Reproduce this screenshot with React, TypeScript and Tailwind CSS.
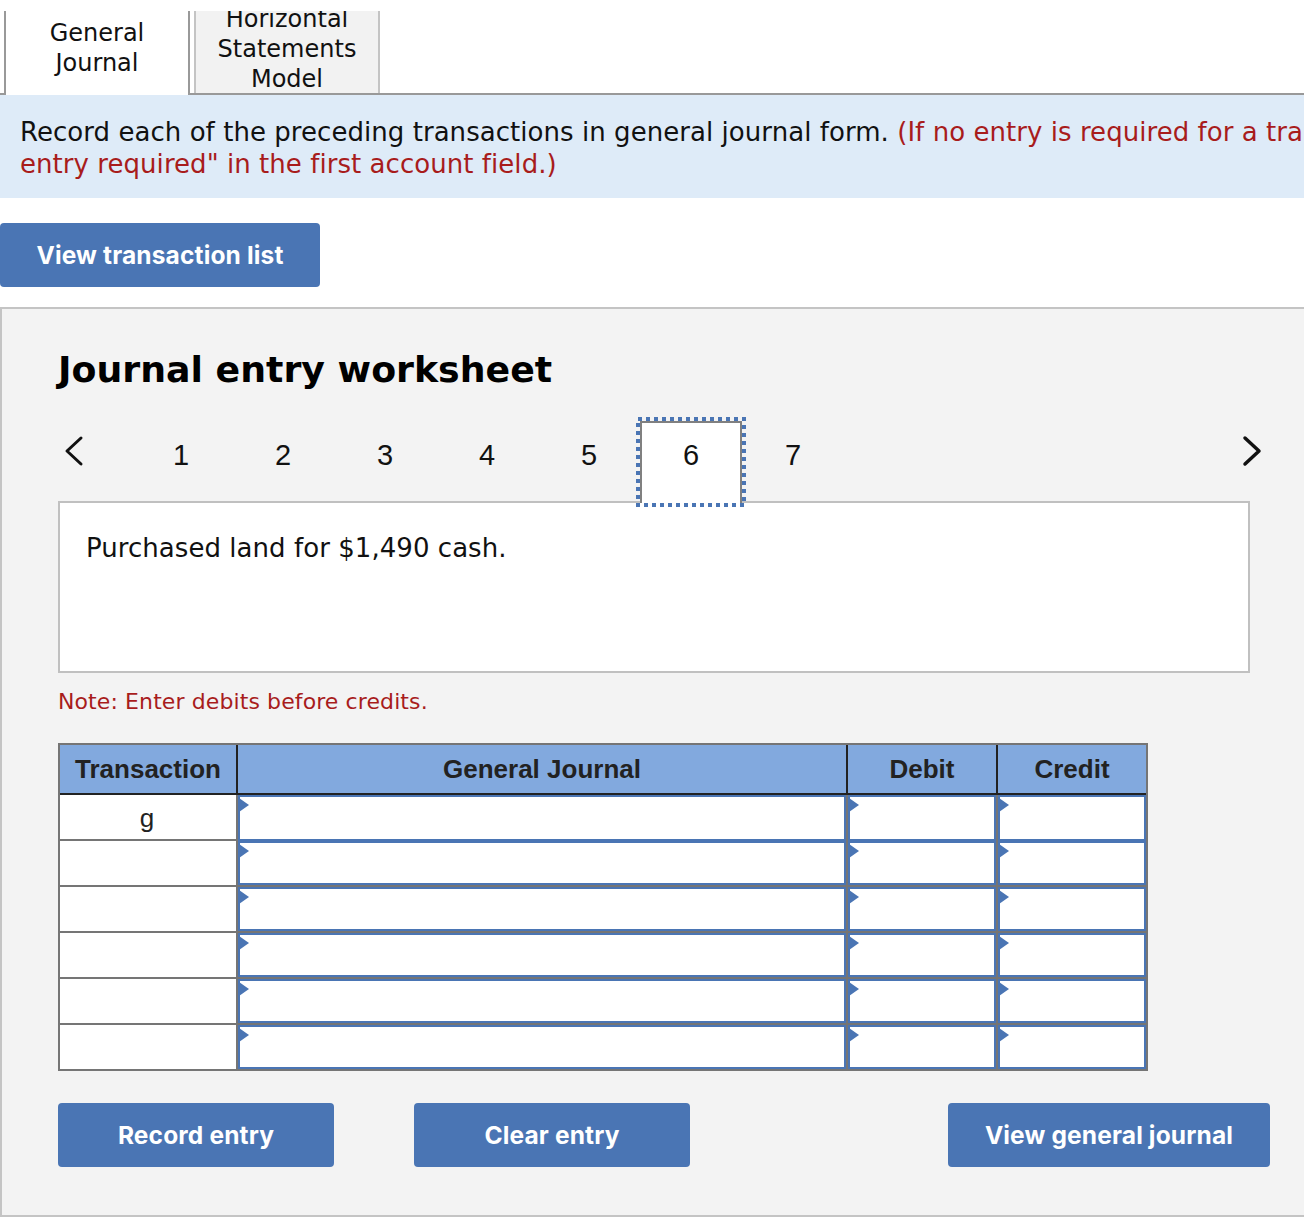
const verdana = "font-['DejaVu_Sans',sans-serif]";
const arial = "font-['Liberation_Sans',sans-serif]";
const inter = "font-['Inter',sans-serif]";

const pages = [1, 2, 3, 4, 5, 6, 7];
const rows = ['g', '', '', '', '', ''];

function EntryCell() {
  return (
    <div className="relative h-full border-2 border-[#4a75b4] bg-white">
      <svg className="absolute -left-px top-px" width="10" height="14" viewBox="0 0 10 14">
        <polygon points="0,0 10,7 0,14" fill="#4a75b4" />
      </svg>
    </div>
  );
}

function ActionButton({ label, className }: { label: string; className: string }) {
  return (
    <button className={`h-16 rounded bg-[#4a75b4] pt-px text-[24.5px] font-bold tracking-[0.15px] text-white ${inter} ${className}`}>
      {label}
    </button>
  );
}

export default function App() {
  return (
    <div className="min-h-[1222px] w-[1316px] bg-white pt-[11px]">
      <div className="w-[1304px] overflow-hidden">
        {/* Tabs */}
        <div className={`flex h-[84px] border-b-2 border-[#999999] text-[24px] leading-[30px] text-[#111111] ${verdana}`}>
          <div className="ml-1 -mb-[2px] flex h-[84px] w-[186px] flex-col items-center border-x-2 border-[#999999] bg-white pt-[7px] text-center">
            <span>General</span>
            <span>Journal</span>
          </div>
          <div className="ml-1 flex h-[82px] w-[186px] flex-col items-center overflow-hidden border-x-2 border-[#c4c4c4] bg-[#f2f2f2] text-center">
            <span className="-mt-[7px]">Horizontal</span>
            <span>Statements</span>
            <span>Model</span>
          </div>
        </div>

        {/* Instructions */}
        <div className={`h-[103px] overflow-hidden whitespace-nowrap bg-[#deebf8] pl-5 pt-[21px] text-[26px] leading-8 tracking-[0.05px] ${verdana}`}>
          <div className="text-[#111111]">
            Record each of the preceding transactions in general journal form.{' '}
            <span className="text-[#a81c1c]">(If no entry is required for a transaction/event, select "No journal</span>
          </div>
          <div className="text-[#a81c1c]">entry required" in the first account field.)</div>
        </div>

        <button className={`mt-[25px] block h-16 w-80 rounded bg-[#4a75b4] pt-px text-[24.5px] font-bold tracking-[0.15px] text-white ${inter}`}>
          View transaction list
        </button>

        {/* Worksheet */}
        <div className="mt-5 h-[910px] border-y-2 border-l-2 border-[#c4c4c4] bg-[#f3f3f3] pl-14">
          <h2 className={`pt-[37px] text-[36.3px] font-bold leading-[48px] text-black ${verdana}`}>Journal entry worksheet</h2>

          <div className={`relative z-10 mt-[27px] flex h-[82px] w-[1192px] text-[29px] text-[#111111] ${arial}`}>
            <svg className="ml-[6px] mt-[14px] shrink-0" width="20" height="32" viewBox="0 0 20 32" fill="none">
              <polyline points="17,3 3,16 17,29" stroke="#111111" strokeWidth="3" strokeLinecap="round" strokeLinejoin="round" />
            </svg>
            <div className="ml-[46px] flex">
              {pages.map((n) => (
                <div
                  key={n}
                  className={`relative flex w-[102px] justify-center leading-[36px] ${
                    n === 6 ? 'border-x-2 border-t-2 border-[#808080] bg-white pt-[14px]' : 'pt-4'
                  }`}
                >
                  {n}
                  {n === 6 && (
                    <svg className="absolute -left-1 -top-1 overflow-visible" width="102" height="83">
                      <rect x="0" y="0" width="106" height="86" fill="none" stroke="#4a75b4" strokeWidth="4" strokeDasharray="4 4" />
                    </svg>
                  )}
                </div>
              ))}
            </div>
            <svg className="ml-auto -mr-[12px] mt-[14px] shrink-0" width="20" height="32" viewBox="0 0 20 32" fill="none">
              <polyline points="3,3 17,16 3,29" stroke="#111111" strokeWidth="3.5" strokeLinecap="round" strokeLinejoin="round" />
            </svg>
          </div>

          <div className={`-mt-[2px] h-[172px] w-[1192px] border-2 border-[#c0c0c0] bg-white pl-[26px] pt-[29px] text-[26px] leading-8 tracking-[0.05px] text-[#111111] ${verdana}`}>
            Purchased land for $1,490 cash.
          </div>

          <p className={`mt-[14px] text-[22px] leading-[30px] tracking-[0.1px] text-[#a81c1c] ${verdana}`}>Note: Enter debits before credits.</p>

          {/* Journal table */}
          <div className={`mt-[26px] w-[1090px] border-2 border-[#757575] ${arial}`}>
            <div className="grid h-[50px] grid-cols-[178px_610px_150px_148px] border-b-2 border-[#222222] bg-[#82a9de] text-center text-[26px] font-bold leading-[48px] text-[#222222]">
              <div className="border-r-2 border-[#222222]">Transaction</div>
              <div className="border-r-2 border-[#222222]">General Journal</div>
              <div className="border-r-2 border-[#222222]">Debit</div>
              <div>Credit</div>
            </div>
            {rows.map((tx, i) => (
              <div
                key={i}
                className={`grid grid-cols-[178px_610px_150px_148px] bg-white ${
                  i < rows.length - 1 ? 'h-[46px] border-b-2 border-[#757575]' : 'h-[44px]'
                }`}
              >
                <div className="border-r-2 border-[#757575] pr-[2px] text-center text-[26px] leading-[46px] text-[#222222]">{tx}</div>
                <div className="border-r-2 border-[#757575]"><EntryCell /></div>
                <div className="border-r-2 border-[#757575]"><EntryCell /></div>
                <EntryCell />
              </div>
            ))}
          </div>

          <div className="mt-8 flex w-[1212px]">
            <ActionButton label="Record entry" className="w-[276px]" />
            <ActionButton label="Clear entry" className="ml-20 w-[276px]" />
            <ActionButton label="View general journal" className="ml-auto w-[322px]" />
          </div>
        </div>
      </div>
    </div>
  );
}
